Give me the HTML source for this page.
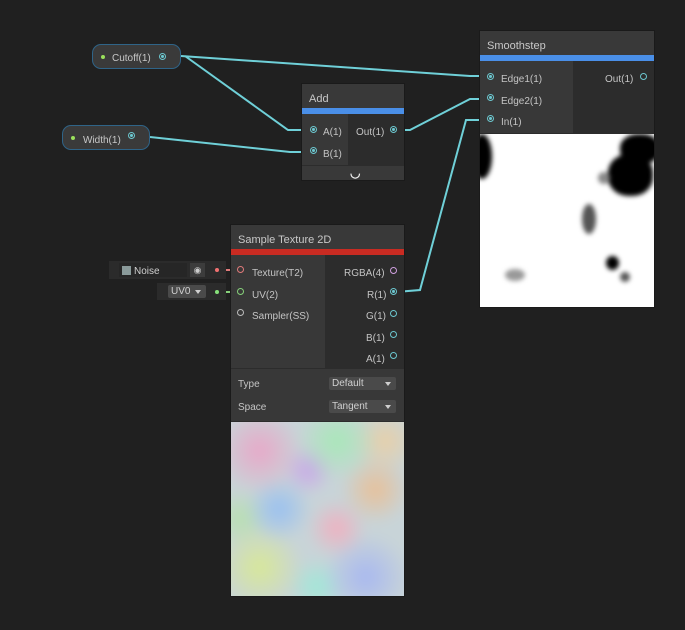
<!DOCTYPE html><html><head><style>
body{margin:0;width:685px;height:630px;background:#202020;font-family:"Liberation Sans",sans-serif;font-size:10px;color:#c4c4c4;position:relative;overflow:hidden}
.a{position:absolute}
.t{position:absolute;margin-top:1px}
.node{position:absolute;background:#2c2c2c;box-shadow:0 0 0 1px #1a1a1a}
.hd{position:absolute;left:0;right:0;top:0;height:24px;background:#393939;color:#c8c8c8;font-size:11px;line-height:30px;padding-left:7px}
.p{position:absolute;width:5px;height:5px;border:1.3px solid #6cc7cf;border-radius:50%}
.p.f::after{content:"";position:absolute;left:1.3px;top:1.3px;width:2.4px;height:2.4px;border-radius:50%;background:#6cc7cf}
.dd{position:absolute;background:#4a4a4a;border-radius:2px;height:13px;line-height:14px;padding-left:3px;color:#d0d0d0;font-size:10px}
.dd::after{content:"";position:absolute;right:5px;top:5px;border:3.5px solid transparent;border-top:4px solid #cfcfcf;border-bottom:0}
</style></head><body>
<svg class="a" style="left:0;top:0" width="685" height="630"><g fill="none" stroke="#6fd0d8" stroke-width="2">
<path d="M181 56 L470 76 L489 76"/><path d="M185 56 L288 130 L310 130"/>
<path d="M150 137 L290 152 L310 152"/><path d="M397 130 L410 130 L470 99 L490 99"/>
<path d="M396 292 L420 290 L466 120 L490 120"/></g>
<path d="M219 270 L240 270" stroke="#e07a7a" stroke-width="2"/><path d="M219 292 L240 292" stroke="#86d07a" stroke-width="2"/></svg>

<div class="a" style="left:92px;top:44px;width:87px;height:23px;border:1px solid #2f6488;border-radius:9px;background:#3a3a3a"></div>
<div class="a" style="left:101px;top:55px;width:4px;height:4px;border-radius:50%;background:#9ae05c"></div>
<div class="t" style="left:112px;top:52px;color:#c8c8c8">Cutoff(1)</div>
<div class="p f" style="left:159px;top:53px"></div>
<div class="a" style="left:62px;top:125px;width:86px;height:23px;border:1px solid #2f6488;border-radius:9px;background:#3a3a3a"></div>
<div class="a" style="left:71px;top:136px;width:4px;height:4px;border-radius:50%;background:#9ae05c"></div>
<div class="t" style="left:83px;top:134px;color:#c8c8c8">Width(1)</div>
<div class="p f" style="left:128px;top:132px"></div>

<div class="node" style="left:302px;top:84px;width:102px;height:96px">
<div class="hd">Add</div><div class="a" style="left:0;right:0;top:24px;height:6px;background:#4a8fe8"></div>
<div class="a" style="left:0;top:30px;width:46px;height:51px;background:#383838"></div>
<div class="a" style="left:0;top:82px;width:102px;height:14px;background:#393939"></div>
<div class="a" style="left:48px;top:82px;color:#eee;font-size:12px;font-weight:bold">&#x25E1;</div>
<div class="p f" style="left:8px;top:42px"></div><div class="t" style="left:21px;top:42px">A(1)</div>
<div class="p f" style="left:8px;top:63px"></div><div class="t" style="left:21px;top:64px">B(1)</div>
<div class="t" style="left:54px;top:42px">Out(1)</div><div class="p f" style="left:88px;top:42px"></div>
</div>

<div class="node" style="left:480px;top:31px;width:174px;height:276px">
<div class="hd">Smoothstep</div><div class="a" style="left:0;right:0;top:24px;height:6px;background:#4a8fe8"></div>
<div class="a" style="left:0;top:30px;width:93px;height:72px;background:#383838"></div>
<div class="p f" style="left:7px;top:42px"></div><div class="t" style="left:21px;top:42px">Edge1(1)</div>
<div class="p f" style="left:7px;top:63px"></div><div class="t" style="left:21px;top:64px">Edge2(1)</div>
<div class="p f" style="left:7px;top:84px"></div><div class="t" style="left:21px;top:85px">In(1)</div>
<div class="t" style="left:125px;top:42px">Out(1)</div><div class="p" style="left:160px;top:42px"></div>
<div class="a" style="left:0;top:103px;width:174px;height:173px;background:#fff;overflow:hidden">
<div class="a" style="left:0;top:0;width:174px;height:173px;filter:blur(2.5px)">
<div class="a" style="left:-8px;top:0px;width:20px;height:45px;background:#000;border-radius:50%"></div>
<div class="a" style="left:140px;top:0px;width:40px;height:30px;background:#000;border-radius:45%"></div>
<div class="a" style="left:128px;top:20px;width:45px;height:42px;background:#000;border-radius:45%"></div>
<div class="a" style="left:118px;top:38px;width:12px;height:12px;background:#888;border-radius:50%"></div>
<div class="a" style="left:102px;top:70px;width:14px;height:30px;background:#555;border-radius:50%"></div>
<div class="a" style="left:126px;top:122px;width:13px;height:14px;background:#000;border-radius:50%"></div>
<div class="a" style="left:140px;top:138px;width:10px;height:10px;background:#555;border-radius:50%"></div>
<div class="a" style="left:25px;top:135px;width:20px;height:12px;background:#999;border-radius:50%"></div>
</div></div></div>

<div class="node" style="left:231px;top:225px;width:173px;height:371px">
<div class="hd">Sample Texture 2D</div><div class="a" style="left:0;right:0;top:24px;height:6px;background:#c92b22"></div>
<div class="a" style="left:0;top:30px;width:94px;height:113px;background:#383838"></div>
<div class="a" style="left:0;top:144px;width:173px;height:52px;background:#383838"></div>
<div class="p" style="left:6px;top:41px;border-color:#e07a7a"></div><div class="t" style="left:21px;top:42px">Texture(T2)</div>
<div class="p" style="left:6px;top:63px;border-color:#86d07a"></div><div class="t" style="left:21px;top:64px">UV(2)</div>
<div class="p" style="left:6px;top:84px;border-color:#bbb"></div><div class="t" style="left:21px;top:85px">Sampler(SS)</div>
<div class="t" style="left:113px;top:42px">RGBA(4)</div><div class="p" style="left:159px;top:42px;border-color:#d0a0e0"></div>
<div class="t" style="left:136px;top:64px">R(1)</div><div class="p f" style="left:159px;top:63px"></div>
<div class="t" style="left:135px;top:85px">G(1)</div><div class="p" style="left:159px;top:85px"></div>
<div class="t" style="left:135px;top:107px">B(1)</div><div class="p" style="left:159px;top:106px"></div>
<div class="t" style="left:135px;top:128px">A(1)</div><div class="p" style="left:159px;top:127px"></div>
<div class="t" style="left:7px;top:153px">Type</div><div class="dd" style="left:98px;top:152px;width:64px">Default</div>
<div class="t" style="left:7px;top:176px">Space</div><div class="dd" style="left:98px;top:175px;width:64px">Tangent</div>
<div class="a" style="left:0;top:197px;width:173px;height:174px;overflow:hidden;background:#c8d8d0">
<div class="a" style="left:-10px;top:-10px;width:193px;height:194px;filter:blur(6px);background:
radial-gradient(circle at 20% 20%,#e8a8c8 0,transparent 20%),radial-gradient(circle at 60% 15%,#a8e8b8 0,transparent 20%),radial-gradient(circle at 80% 40%,#e8c098 0,transparent 18%),radial-gradient(circle at 30% 50%,#98c0f0 0,transparent 20%),radial-gradient(circle at 60% 60%,#f0b0c0 0,transparent 18%),radial-gradient(circle at 20% 80%,#d8e898 0,transparent 20%),radial-gradient(circle at 75% 85%,#a8b8f0 0,transparent 20%),radial-gradient(circle at 45% 30%,#c8a8e8 0,transparent 15%),radial-gradient(circle at 50% 90%,#a0e8d8 0,transparent 15%),radial-gradient(circle at 85% 15%,#e8d0a8 0,transparent 15%),radial-gradient(circle at 10% 55%,#b8e0b0 0,transparent 15%),#c8d4d8"></div></div>
</div>

<div class="a" style="left:109px;top:261px;width:117px;height:18px;background:#2b2b2b"></div>
<div class="a" style="left:119px;top:263px;width:68px;height:14px;background:#262626"></div>
<div class="a" style="left:122px;top:266px;width:9px;height:9px;background:#8a9a9a"></div>
<div class="t" style="left:134px;top:265px;color:#d0d0d0">Noise</div>
<div class="a" style="left:190px;top:263px;width:15px;height:14px;background:#3c3c3c;color:#ccc;font-size:9px;text-align:center;line-height:14px">&#x25C9;</div>
<div class="a" style="left:215px;top:268px;width:4px;height:4px;border-radius:50%;background:#f07070"></div>
<div class="a" style="left:157px;top:283px;width:69px;height:17px;background:#2b2b2b"></div>
<div class="dd" style="left:168px;top:285px;width:35px">UV0</div>
<div class="a" style="left:215px;top:290px;width:4px;height:4px;border-radius:50%;background:#86e07a"></div>
</body></html>
